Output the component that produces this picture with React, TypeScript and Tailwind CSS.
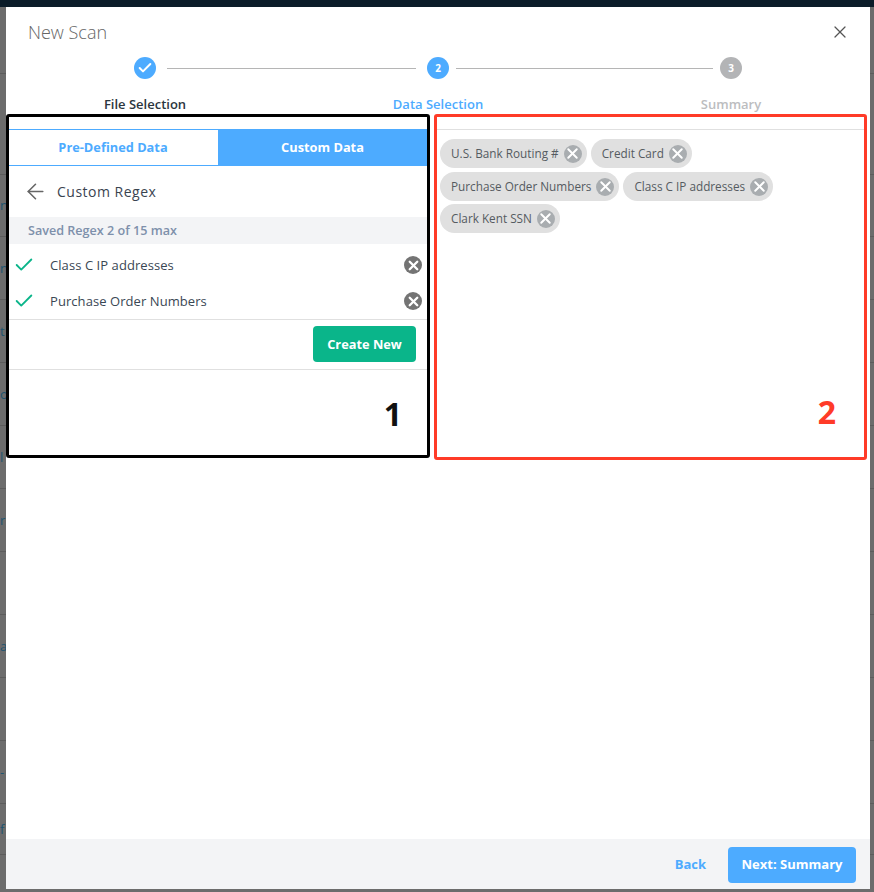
import { ArrowLeft, Check, X } from "lucide-react";

const bgRows = [
  { h: "h-[67px]", letter: "" },
  { h: "h-[101px]", letter: "" },
  { h: "h-[62px]", letter: "n" },
  { h: "h-[63px]", letter: "n" },
  { h: "h-[63px]", letter: "t" },
  { h: "h-[63px]", letter: "o" },
  { h: "h-[63px]", letter: "l" },
  { h: "h-[63px]", letter: "r" },
  { h: "h-[63px]", letter: "" },
  { h: "h-[63px]", letter: "a" },
  { h: "h-[63px]", letter: "" },
  { h: "h-[63px]", letter: "-" },
  { h: "h-[51px]", letter: "f" },
];

const savedRegex = [
  { name: "Class C IP addresses", rowClass: "h-[39px] pt-[3px]" },
  { name: "Purchase Order Numbers", rowClass: "h-[36px]" },
];

const tagRows = [
  ["U.S. Bank Routing #", "Credit Card"],
  ["Purchase Order Numbers", "Class C IP addresses"],
  ["Clark Kent SSN"],
];

function Tag({ label }: { label: string }) {
  return (
    <div className="flex h-[29px] items-center gap-[5px] rounded-full bg-[#e0e0e0] pl-[11px] pr-[5px] text-[11.75px] text-[#555b60]">
      {label}
      <span className="flex size-[18px] items-center justify-center rounded-full bg-[#a9adb0]">
        <X className="size-[17px] shrink-0 text-white" strokeWidth={2.75} />
      </span>
    </div>
  );
}

function Background() {
  return (
    <div className="flex flex-col">
      <div className="h-[7px] bg-[#0b1c29]" />
      {bgRows.map((row, i) => (
        <div
          key={i}
          className={`${row.h} flex items-center justify-between overflow-hidden border-b border-[#5c5c5c] text-[13px] leading-none text-[#1d5470]`}
        >
          {row.letter}
        </div>
      ))}
    </div>
  );
}

export default function App() {
  return (
    <div
      className="relative h-[892px] w-[874px] overflow-hidden bg-[#6c6c6c]"
      style={{ fontFamily: '"Open Sans", sans-serif' }}
    >
      <Background />

      <div className="absolute left-[6px] top-[7px] flex h-[882px] w-[864px] flex-col bg-white">
        <header className="flex h-[50px] items-center justify-between pl-[22px] pr-[20px]">
          <h1 className="text-[18px] font-light text-[#666]">New Scan</h1>
          <X className="size-[20px] text-[#555]" strokeWidth={1.5} />
        </header>

        <div className="flex h-[22px] items-center pl-[128px]">
          <span className="flex size-[22px] items-center justify-center rounded-full bg-[#4dabff]">
            <Check className="size-[16px] text-white" strokeWidth={3} />
          </span>
          <div className="ml-[11px] h-px w-[249px] bg-[#b5b5b5]" />
          <span className="ml-[11px] flex size-[22px] items-center justify-center rounded-full bg-[#4dabff] text-[10px] font-bold text-white">
            2
          </span>
          <div className="ml-[7px] h-px w-[257px] bg-[#b5b5b5]" />
          <span className="ml-[7px] flex size-[22px] items-center justify-center rounded-full bg-[#b3b4b6] text-[10px] font-bold text-white">
            3
          </span>
        </div>

        <div className="mt-[16px] grid h-[19px] grid-cols-[278px_308px_278px] items-center text-center text-[13px] font-semibold">
          <span className="text-[#2b3640]">File Selection</span>
          <span className="text-[#4dabff]">Data Selection</span>
          <span className="text-[#bcbdbf]">Summary</span>
        </div>

        <div className="flex flex-1 items-start gap-[4px]">
          <section className="flex h-[344px] w-[424px] flex-col rounded-[3px] border-[3px] border-black pt-[12px]">
            <div className="flex h-[37px] border-y border-[#4dabff] text-[12.8px] font-bold">
              <div className="flex w-[209px] items-center justify-center pr-[1px] text-[#4dabff]">Pre-Defined Data</div>
              <div className="flex flex-1 items-center justify-center bg-[#4dabff] text-white">Custom Data</div>
            </div>

            <div className="flex h-[51px] items-center gap-[9px] pl-[14px]">
              <ArrowLeft className="size-[25px] text-[#666]" strokeWidth={1.5} />
              <span className="text-[14px] font-medium tracking-[0.5px] text-[#3a4450]">Custom Regex</span>
            </div>

            <div className="flex h-[27px] items-center bg-[#f3f4f6] pl-[19px] pt-[1px] text-[12.6px] font-semibold text-[#7e90ab]">
              Saved Regex 2 of 15 max
            </div>

            <ul className="border-b border-[#e0e0e0] text-[13px] text-[#3a4754]">
              {savedRegex.map(item => (
                <li key={item.name} className={`flex items-center pl-[4px] pr-[5px] ${item.rowClass}`}>
                  <Check className="size-[22px] text-[#0bb58a]" strokeWidth={2} />
                  <span className="ml-[15px] flex-1 pt-[1px] tracking-[0.07px]">{item.name}</span>
                  <span className="flex size-[18px] items-center justify-center rounded-full bg-[#747474]">
                    <X className="size-[15px] shrink-0 text-white" strokeWidth={3.75} />
                  </span>
                </li>
              ))}
            </ul>

            <div className="flex h-[50px] items-center justify-end border-b border-[#e0e0e0] pb-[2px] pr-[11px]">
              <button className="h-[36px] w-[103px] rounded-[4px] bg-[#0ab58a] pt-[2px] text-[12.8px] font-bold text-white">
                Create New
              </button>
            </div>

            <div className="flex flex-1 items-center justify-end pr-[25px] pt-[3px] text-[32px] font-bold leading-none text-[#111]">
              1
            </div>
          </section>

          <section className="flex h-[346px] w-[433px] flex-col rounded-[3px] border-[3px] border-[#ff3b28] pt-[12px]">
            <div className="flex flex-col border-t border-[#e0e0e0] pl-[3px] pt-[9px]">
              {tagRows.map(row => (
                <div key={row[0]} className="flex gap-[4px] even:mb-[3px] even:mt-[4px]">
                  {row.map(label => (
                    <Tag key={label} label={label} />
                  ))}
                </div>
              ))}
            </div>

            <div className="mt-[163px] pr-[28px] text-right text-[32px] font-bold leading-none text-[#ff3b28]">2</div>
          </section>
        </div>

        <footer className="flex h-[50px] items-center justify-end gap-[22px] bg-[#f3f4f6] pr-[14px] pt-[2px]">
          <span className="text-[13px] font-bold text-[#4dabff]">Back</span>
          <button className="h-[36px] w-[128px] rounded-[4px] bg-[#4dabff] text-[13px] font-bold text-white">
            Next: Summary
          </button>
        </footer>
      </div>
    </div>
  );
}
